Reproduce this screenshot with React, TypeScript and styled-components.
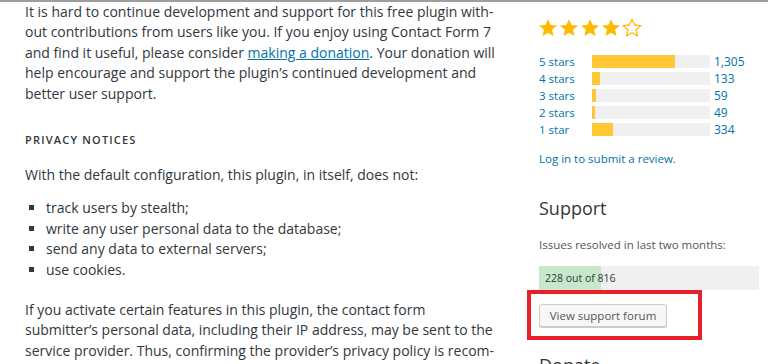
import React from 'react';
import styled, { createGlobalStyle } from 'styled-components';

const GlobalStyle = createGlobalStyle`
  html, body {
    margin: 0;
    padding: 0;
    background: #fff;
  }
  body {
    font-family: "Open Sans", "Noto Sans", sans-serif;
    color: #32373c;
    overflow: hidden;
  }
`;

const Page = styled.div`
  width: 768px;
  height: 364px;
  overflow: hidden;
  border-top: 2px solid #9e9e9e;
  box-sizing: border-box;
  display: flex;
  gap: 39px;
  padding-left: 25px;
`;

const Main = styled.div`
  width: 475px;
  flex-shrink: 0;
  font-size: 14px;
  line-height: 20.4px;
  color: #32373c;
`;

const Para = styled.p<{ $top?: number }>`
  margin: ${(p) => p.$top ?? 0}px 0 0;
  hyphens: manual;
`;

const Link = styled.a`
  color: #0073aa;
  text-decoration: underline;
`;

const SectionTitle = styled.h3`
  margin: 28px 0 0;
  font-size: 11px;
  line-height: 16px;
  font-weight: 600;
  letter-spacing: 1.2px;
  text-transform: uppercase;
  color: #32373c;
`;

const List = styled.ul`
  margin: 13px 0 0;
  padding: 0 0 0 21px;
  list-style: square;
`;

const Sidebar = styled.aside`
  width: 222px;
  flex-shrink: 0;
  padding-top: 16px;
`;

const Stars = styled.div`
  display: flex;
  gap: 1px;
  margin-left: -1px;
`;

const RatingTable = styled.div`
  margin-top: 16px;
  display: flex;
  flex-direction: column;
  gap: 3px;
`;

const RatingRow = styled.div`
  display: flex;
  align-items: center;
  height: 14px;
  font-size: 11.5px;
  color: #0073aa;
`;

const RatingLabel = styled.a`
  width: 53px;
  color: #0073aa;
  text-decoration: none;
`;

const Bar = styled.div`
  width: 118px;
  height: 13px;
  background: #f0f0f0;
`;

const BarFill = styled.div`
  height: 100%;
  background: #ffc733;
`;

const Count = styled.span`
  margin-left: 4px;
  font-size: 12px;
`;

const LoginLink = styled.a`
  display: block;
  margin-top: 15px;
  font-size: 11.5px;
  color: #0073aa;
  text-decoration: none;
`;

const WidgetTitle = styled.h3<{ $top: number }>`
  margin: ${(p) => p.$top}px 0 0;
  font-size: 18px;
  line-height: 26px;
  font-weight: 400;
  color: #32373c;
`;

const Caption = styled.p`
  margin: 16px 0 0;
  font-size: 11.5px;
  color: #555;
`;

const Progress = styled.div`
  margin-top: 14px;
  height: 24px;
  width: 220px;
  background: #f0f0f0;
  position: relative;
  display: flex;
  align-items: center;
`;

const ProgressFill = styled.div`
  position: absolute;
  left: 0;
  top: 0;
  bottom: 0;
  background: #c7e8ca;
`;

const ProgressText = styled.span`
  position: relative;
  padding-left: 6px;
  font-size: 10.5px;
  color: #32373c;
`;

const Highlight = styled.div`
  margin-left: -12px;
  width: 175px;
  height: 50px;
  box-sizing: border-box;
  border: 4px solid #e8202a;
  padding: 9px 0 0 8px;
`;

const Button = styled.button`
  height: 23px;
  width: 128px;
  padding: 0;
  background: #f7f7f7;
  border: 1px solid #ccc;
  border-radius: 3px;
  box-shadow: 0 1px 0 #ccc;
  font-family: "Open Sans", sans-serif;
  font-size: 11.5px;
  color: #555;
`;

const Star = ({ filled }: { filled: boolean }) => (
  <svg width="20" height="20" viewBox="0 0 20 20">
    <path
      d="M10 1.2l2.6 5.8 6.3.6-4.8 4.2 1.4 6.2L10 14.8 4.5 18l1.4-6.2L1.1 7.6l6.3-.6z"
      fill={filled ? '#ffb900' : 'none'}
      stroke="#ffb900"
      strokeWidth={filled ? 0 : 1.3}
      strokeLinejoin="round"
    />
  </svg>
);

const ratings = [
  { label: '5 stars', count: '1,305', pct: 70.5 },
  { label: '4 stars', count: '133', pct: 7 },
  { label: '3 stars', count: '59', pct: 3.4 },
  { label: '2 stars', count: '49', pct: 2.6 },
  { label: '1 star', count: '334', pct: 18 },
];

export default function App() {
  return (
    <>
      <GlobalStyle />
      <Page>
        <Main>
          <Para>
            It is hard to continue development and support for this free plugin with{'\u00AD'}out
            contributions from users like you. If you enjoy using Contact Form 7 and find it
            useful, please consider <Link href="#">making a donation</Link>. Your donation will
            help encourage and support the plugin’s continued development and better user
            support.
          </Para>
          <SectionTitle>Privacy Notices</SectionTitle>
          <Para $top={17}>With the default configuration, this plugin, in itself, does not:</Para>
          <List>
            <li>track users by stealth;</li>
            <li>write any user personal data to the database;</li>
            <li>send any data to external servers;</li>
            <li>use cookies.</li>
          </List>
          <Para $top={20}>
            If you activate certain features in this plugin, the contact form submitter’s
            personal data, including their IP address, may be sent to the service provider.
            Thus, confirming the provider’s privacy policy is recom{'\u00AD'}mended.
          </Para>
        </Main>
        <Sidebar>
          <Stars>
            {[0, 1, 2, 3, 4].map((i) => (
              <Star key={i} filled={i < 4} />
            ))}
          </Stars>
          <RatingTable>
            {ratings.map((r) => (
              <RatingRow key={r.label}>
                <RatingLabel href="#">{r.label}</RatingLabel>
                <Bar>
                  <BarFill style={{ width: `${r.pct}%` }} />
                </Bar>
                <Count>{r.count}</Count>
              </RatingRow>
            ))}
          </RatingTable>
          <LoginLink href="#">Log in to submit a review.</LoginLink>
          <WidgetTitle $top={29}>Support</WidgetTitle>
          <Caption>Issues resolved in last two months:</Caption>
          <Progress>
            <ProgressFill style={{ width: '28%' }} />
            <ProgressText>228 out of 816</ProgressText>
          </Progress>
          <Highlight>
            <Button>View support forum</Button>
          </Highlight>
          <WidgetTitle $top={12}>Donate</WidgetTitle>
        </Sidebar>
      </Page>
    </>
  );
}
